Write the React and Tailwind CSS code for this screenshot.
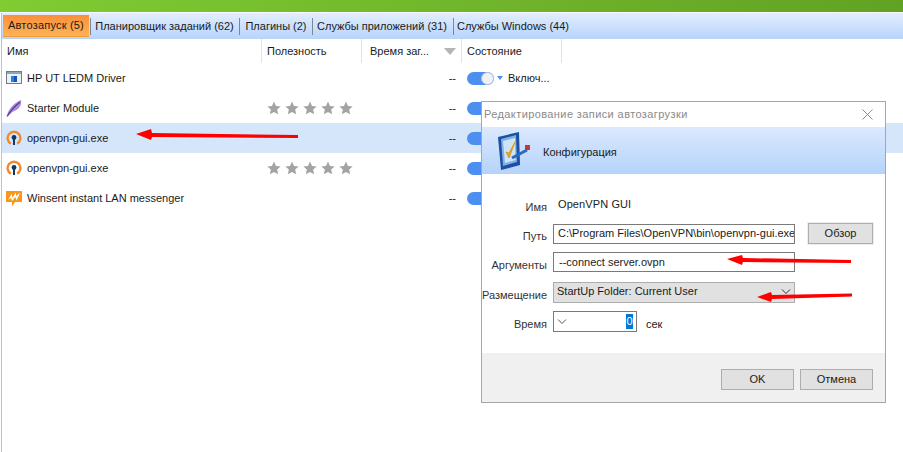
const Star = () => (
  <svg width="14" height="14" viewBox="0 0 24 24" className="shrink-0">
    <path d="M12 1l3.4 7.4 8 .9-6 5.4 1.700 8L12 18.700 4.900 22.700l1.700-8-6-5.400 8-.9z" fill="#a3a3a3" />
  </svg>
);

const Stars = () => (
  <div className="flex gap-1">
    <Star />
    <Star />
    <Star />
    <Star />
    <Star />
  </div>
);

const HpIcon = () => (
  <svg width="16" height="14" viewBox="0 0 16 14">
    <rect x="0.500" y="0.500" width="15" height="12" fill="#eef1f5" stroke="#6b7c93" />
    <rect x="1" y="1" width="14" height="2" fill="#8fa3bd" />
    <rect x="5" y="5" width="3" height="6" fill="#2f7fe0" />
    <rect x="8" y="5" width="3" height="6" fill="#0f56c4" />
  </svg>
);

const QuillIcon = () => (
  <svg width="16" height="17" viewBox="0 0 16 17">
    <path d="M1 16C2 9 8 3 15 0c1 5-2 10-8 11.500L2 16z" fill="#a98bd8" />
    <path d="M1 16.500C5 10 9 6 14 2" stroke="#5a3596" strokeWidth="1.200" fill="none" />
  </svg>
);

const VpnIcon = () => (
  <svg width="16" height="16" viewBox="0 0 16 16">
    <path d="M4.300 14.800a7.600 7.600 0 1 1 7.400 0l-1.100-2.100a5.200 5.200 0 1 0-5.200 0z" fill="#ef8a2d" />
    <circle cx="8" cy="7.500" r="2.400" fill="#16365f" />
    <rect x="7" y="8" width="2" height="7" fill="#16365f" />
  </svg>
);

const WinsentIcon = () => (
  <svg width="16" height="17" viewBox="0 0 16 17">
    <path d="M0 1h16v11H9l-3 4.500V12H0z" fill="#f7981c" />
    <path d="M2 10l3.500-6 1 3.500L10 2.500v3.500L14 3l-3.500 7.500-1-3.500-3.500 4-1-3z" fill="#fff" />
  </svg>
);

const Toggle = () => (
  <div className="w-[27px] h-[13px] rounded-full bg-[#4d8ff0] flex justify-end items-center shrink-0">
    <div className="w-[13px] h-[13px] rounded-full bg-[#eef1f6] border border-[#b9c3d2]"></div>
  </div>
);

const Arrow = ({ className, width, d }) => (
  <svg className={className} width={width} height="12" viewBox={`0 0 ${width} 12`}>
    <path d={d} fill="#fe0000" />
  </svg>
);

const rows = [
  { id: 1, name: "HP UT LEDM Driver", icon: <HpIcon />, stars: false, state: true },
  { id: 2, name: "Starter Module", icon: <QuillIcon />, stars: true },
  { id: 3, name: "openvpn-gui.exe", icon: <VpnIcon />, stars: false, selected: true },
  { id: 4, name: "openvpn-gui.exe", icon: <VpnIcon />, stars: true },
  { id: 5, name: "Winsent instant LAN messenger", icon: <WinsentIcon />, stars: false },
];

const FormLabel = ({ children }) => (
  <span className="w-[65px] pt-[6px] leading-[13px] text-right text-[#333] shrink-0">{children}</span>
);

export default function App() {
  return (
    <div className="relative w-[903px] h-[452px] bg-white overflow-hidden flex flex-col text-[11px] text-[#1a1a1a] whitespace-nowrap font-['Liberation_Sans',sans-serif]">
      <div className="h-[12px] bg-gradient-to-r from-[#80cc33] to-[#62a223]"></div>
      <div className="h-[1px] bg-white"></div>

      <div className="flex-1 ml-[1px] border-l-[1px] border-[#a9c4ee]">
        {/* tabs */}
        <div className="h-[26px] pl-[1px] flex items-center bg-gradient-to-b from-[#e2eefe] to-[#b7d4fb]">
          <div className="w-[86px] h-[22px] flex items-center justify-center tracking-[0.2px] bg-gradient-to-b from-[#f98f3a] to-[#feb355] border-b border-[#f09a3e]">
            Автозапуск (5)
          </div>
          <div className="ml-[1px] w-[1px] h-[17px] bg-[#7d8793]"></div>
          <div className="w-[148px] pr-[1px] text-center">Планировщик заданий (62)</div>
          <div className="w-[1px] h-[17px] bg-[#7d8793]"></div>
          <div className="w-[72px] text-center">Плагины (2)</div>
          <div className="w-[1px] h-[17px] bg-[#7d8793]"></div>
          <div className="w-[140px] pr-[2px] text-center">Службы приложений (31)</div>
          <div className="w-[1px] h-[17px] bg-[#7d8793]"></div>
          <div className="w-[118px] text-center">Службы Windows (44)</div>
        </div>

        {/* table head */}
        <div className="h-[24px] flex items-center">
          <div className="w-[260px] pl-[5px] h-full flex items-center border-r border-[#e3e3e3]">Имя</div>
          <div className="w-[100px] pl-[5px] h-full flex items-center border-r border-[#e3e3e3]">Полезность</div>
          <div className="w-[100px] pl-[8px] h-full flex items-center justify-between pr-[5px] border-r border-[#e3e3e3]">
            <span>Время заг...</span>
            <span className="w-0 h-0 border-x-[6px] border-x-transparent border-t-[7px] border-t-[#b5b5b5]"></span>
          </div>
          <div className="w-[100px] pl-[5px] h-full flex items-center border-r border-[#e3e3e3]">Состояние</div>
        </div>

        {/* rows */}
        {rows.map((row) => (
          <div key={row.id} className={`h-[30px] flex items-center ${row.selected ? "bg-[#d5e6fb]" : ""}`}>
            <div className="w-[260px] pl-[4px] flex items-center gap-[5px]">
              <span className="w-[16px] flex justify-center shrink-0">{row.icon}</span>
              <span>{row.name}</span>
            </div>
            <div className="w-[100px] pl-[5px]">{row.stars && <Stars />}</div>
            <div className="w-[100px] pr-[6px] text-right">--</div>
            <div className="pl-[5px] flex items-center">
              <Toggle />
              {row.state && (
                <>
                  <span className="ml-[3px] w-0 h-0 border-x-[3px] border-x-transparent border-t-[4px] border-t-[#4d8ff0]"></span>
                  <span className="ml-[5px]">Включ...</span>
                </>
              )}
            </div>
          </div>
        ))}
      </div>

      {/* arrow in the list */}
      <Arrow
        className="absolute left-[136px] top-[129px]"
        width="162"
        d="M0 5L15 0l1 4 146 2v3L16 8l-1 3z"
      />

      {/* dialog */}
      <div className="absolute left-[481px] top-[101px] w-[405px] h-[302px] bg-white border border-[#a6a6a6] flex flex-col">
        <div className="h-[25px] pl-[2px] pr-[12px] flex items-center justify-between text-[#8a8a8a] tracking-[0.4px]">
          <span>Редактирование записи автозагрузки</span>
          <svg width="11" height="11" viewBox="0 0 11 11">
            <path d="M0.500 0.500l10 10M10.500 0.500l-10 10" stroke="#8c8c8c" fill="none" />
          </svg>
        </div>
        <div className="h-[47px] pl-[16px] flex items-center bg-gradient-to-b from-[#dbe9fd] to-[#b5d3fb]">
          <svg width="34" height="38" viewBox="0 0 34 38">
            <path d="M0 5L21 0l1 33L3 38z" fill="#1d4fa3" />
            <path d="M3 7l15-4 1 27L5 34z" fill="#7fb0e6" />
            <path d="M5 9l12-3 .5 22L7 31z" fill="#cfe4f8" />
            <path d="M8 20l3 6 6-16-6 11z" fill="#e0a92c" stroke="#d9a020" />
            <path d="M14 26l15-8" stroke="#2a69bd" strokeWidth="3" />
            <rect x="27" y="13" width="5" height="5" fill="#c23b32" />
          </svg>
          <span className="ml-[11px] mt-[4px]">Конфигурация</span>
        </div>

        <div className="flex-1 pt-[23px] flex flex-col">
          <div className="h-[18px] flex items-center">
            <span className="w-[65px] pt-[2px] text-right text-[#333] shrink-0">Имя</span>
            <span className="ml-[6px] mt-[-4px] pl-[5px] tracking-[0.1px]">OpenVPN GUI</span>
          </div>
          <div className="mt-[8px] flex items-center">
            <FormLabel>Путь</FormLabel>
            <div className="ml-[6px] w-[242px] h-[20px] pl-[4px] flex items-center border border-[#7a7a7a] overflow-hidden">
              C:\Program Files\OpenVPN\bin\openvpn-gui.exe
            </div>
            <div className="ml-[13px] w-[65px] h-[21px] flex items-center justify-center bg-[#e1e1e1] border border-[#adadad] outline outline-1 outline-[#eeeeee]">
              Обзор
            </div>
          </div>
          <div className="mt-[8px] flex items-center">
            <FormLabel>Аргументы</FormLabel>
            <div className="ml-[6px] w-[242px] h-[20px] pl-[5px] flex items-center border border-[#7a7a7a]">
              --connect server.ovpn
            </div>
          </div>
          <div className="mt-[10px] flex items-center">
            <FormLabel>Размещение</FormLabel>
            <div className="ml-[6px] w-[242px] h-[21px] pl-[3px] pr-[3px] pb-[2px] flex items-center justify-between bg-[#e1e1e1] border border-[#adadad]">
              <span>StartUp Folder: Current User</span>
              <svg width="10" height="6" viewBox="0 0 10 6">
                <path d="M1 0.500l4 4 4-4" stroke="#333" fill="none" />
              </svg>
            </div>
          </div>
          <div className="mt-[8px] flex items-center">
            <FormLabel>Время</FormLabel>
            <div className="ml-[6px] w-[84px] h-[21px] pl-[3px] pr-[3px] flex items-center justify-between border border-[#7a7a7a]">
              <svg width="10" height="6" viewBox="0 0 10 6">
                <path d="M1 0.500l4 4 4-4" stroke="#555" fill="none" />
              </svg>
              <span className="w-[7px] h-[15px] bg-[#0078d7] text-white text-center leading-[15px]">0</span>
            </div>
            <span className="ml-[9px] mt-[5px]">сек</span>
          </div>
        </div>

        <div className="h-[49px] pr-[12px] pb-[12px] flex items-end justify-end gap-[6px] bg-[#f0f0f0]">
          <div className="w-[73px] h-[21px] flex items-center justify-center bg-[#e1e1e1] border border-[#adadad]">OK</div>
          <div className="w-[73px] h-[21px] flex items-center justify-center bg-[#e1e1e1] border border-[#adadad]">Отмена</div>
        </div>
      </div>

      {/* arrows over the dialog */}
      <Arrow
        className="absolute left-[727px] top-[254px]"
        width="124"
        d="M0 5L15 1l1 3 108 2v3L16 8l-1 3z"
      />
      <Arrow
        className="absolute left-[757px] top-[291px]"
        width="95"
        d="M0 6L14 1l1 3 80-1.500v3L15 8l-1 3z"
      />
    </div>
  );
}
